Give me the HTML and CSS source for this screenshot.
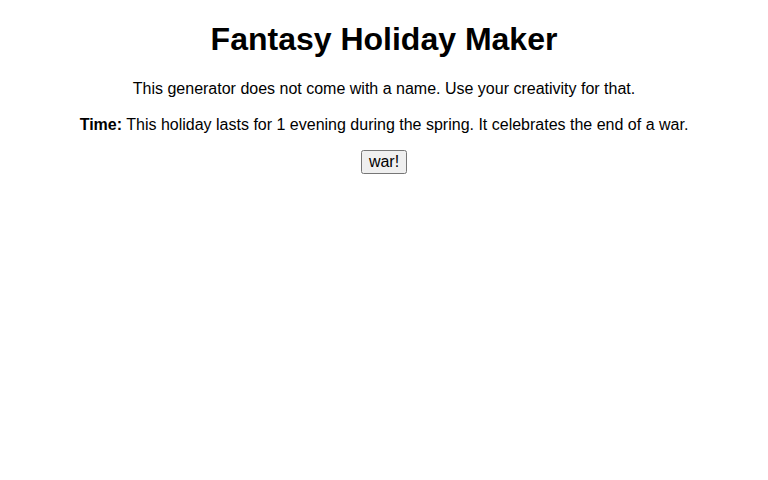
FILE: index.html
```html
<!DOCTYPE html>
<html lang="en">
<head>
<meta charset="UTF-8">
<title>Fantasy Holiday Maker</title>
<link rel="stylesheet" href="styles.css">
</head>
<body>
<h1>Fantasy Holiday Maker</h1>
<p class="intro">This generator does not come with a name. Use your creativity for that.</p>
<p><b>Time:</b> This holiday lasts for 1 evening during the spring. It celebrates the end of a war.</p>
<div class="controls">
  <button class="gen">war!</button>
</div>
</body>
</html>
```

FILE: styles.css
```css
body {
  font-family: "Liberation Sans", Arial, sans-serif;
  text-align: center;
  color: #000;
  background: #fff;
  margin: 0;
  padding: 0 8px;
}
h1 {
  font-size: 32px;
  margin: 21px 0 22px;
}
p { margin: 16px 0; }
.intro { margin-bottom: 18px; }
.gen {
  font-family: "Liberation Sans", Arial, sans-serif;
  font-size: 16px;
}
```
